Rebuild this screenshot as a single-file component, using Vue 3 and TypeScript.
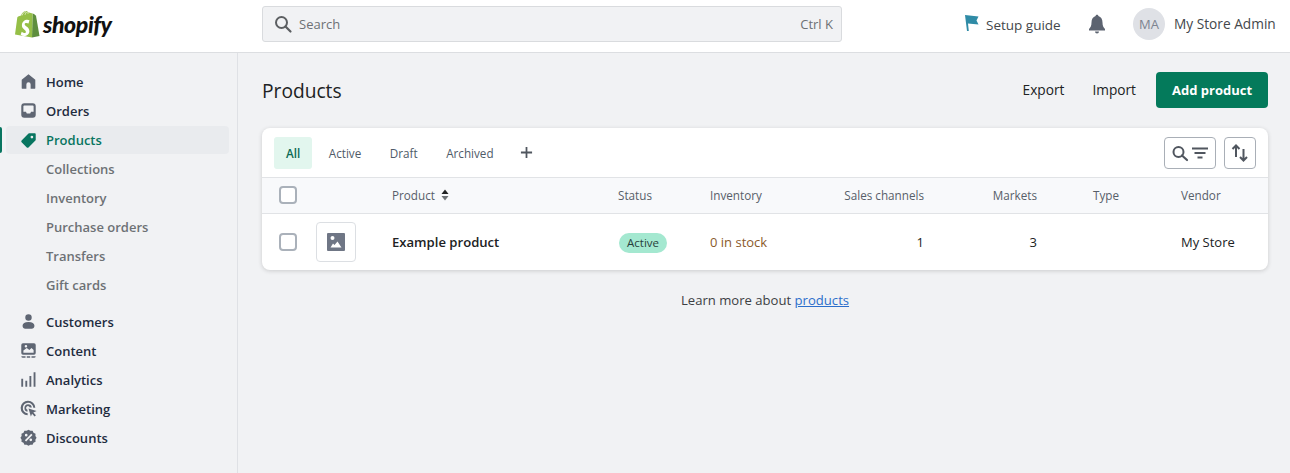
<script setup lang="ts">
interface NavItem { label: string; icon: string; active?: boolean }
const topNav: NavItem[] = [
  { label: 'Home', icon: 'M10 1.500 2 8v9.500a1 1 0 0 0 1 1h4.500v-5a2.500 2.500 0 0 1 5 0v5H17a1 1 0 0 0 1-1V8z' },
  { label: 'Orders', icon: 'M5 1.500h10a3.500 3.500 0 0 1 3.500 3.500v10a3.500 3.500 0 0 1-3.500 3.500H5A3.500 3.500 0 0 1 1.500 15V5A3.500 3.500 0 0 1 5 1.500zm0 2.500a1 1 0 0 0-1 1v6.500h3l1 2h4l1-2h3V5a1 1 0 0 0-1-1z' },
  { label: 'Products', active: true, icon: 'M11 1.500h6.500a1 1 0 0 1 1 1V9a1.400 1.400 0 0 1-.4 1L10 18.100a1.400 1.400 0 0 1-2 0L1.900 12a1.400 1.400 0 0 1 0-2L10 1.900a1.400 1.400 0 0 1 1-.4zm3 2.900a1.600 1.600 0 1 0 0 3.200 1.600 1.600 0 0 0 0-3.200z' },
]
const subNav = ['Collections', 'Inventory', 'Purchase orders', 'Transfers', 'Gift cards']
const bottomNav: NavItem[] = [
  { label: 'Customers', icon: 'M10 1.500a3.800 3.800 0 1 1 0 7.600 3.800 3.800 0 0 1 0-7.600zM10 10.500c4.500 0 7 1.800 7 4.500 0 2.200-1.500 3.500-3.200 3.500H6.200C4.500 18.500 3 17.200 3 15c0-2.700 2.500-4.500 7-4.500z' },
  { label: 'Content', icon: 'M3.500 1.500h13a2 2 0 0 1 2 2v9.500a2 2 0 0 1-2 2h-13a2 2 0 0 1-2-2V3.500a2 2 0 0 1 2-2zm.5 11h12V9.500L13.500 7l-2.500 2.500L8 7 4 10zM7 3.500a1.500 1.500 0 1 0 0 3 1.500 1.500 0 0 0 0-3zM1.500 16.700h5v1.800h-3a2 2 0 0 1-2-1.800zm6.500 0h4v1.800H8zm5.500 0h5a2 2 0 0 1-2 1.800h-3z' },
  { label: 'Analytics', icon: 'M1.500 9h2.200v9.500H1.500zM6.300 11.500h2.200v7H6.300zM11.100 6h2.200v12.500h-2.200zM16 1.500h2.200v17H16z' },
  { label: 'Marketing', icon: 'M9.500 1a8.500 8.500 0 0 1 8.500 8h-2.300a6.200 6.200 0 1 0-6.700 6.700V18A8.500 8.500 0 0 1 9.500 1zm0 4a4.500 4.500 0 0 1 4.400 3.800h-2.400a2.200 2.200 0 1 0-2.700 2.700v2.400A4.500 4.500 0 0 1 9.500 5zM10 10l9.500 3-3.800 1.800 3 3-1.500 1.500-3-3L12.800 19.500z' },
  { label: 'Discounts', icon: 'M10 .800l2.200 1.400 2.600-.2 1.100 2.400 2.400 1.100-.2 2.600 1.400 2.200-1.400 2.200.2 2.600-2.400 1.100-1.100 2.400-2.600-.2-2.200 1.400-2.200-1.400-2.600.2-1.100-2.400-2.400-1.100.2-2.600L.5 10.300l1.400-2.200-.2-2.600 2.400-1.100L5.200 2l2.600.2zM7.300 5.700a1.600 1.600 0 1 0 0 3.200 1.600 1.600 0 0 0 0-3.200zm5.400 5.400a1.600 1.600 0 1 0 0 3.200 1.600 1.600 0 0 0 0-3.200zm.5-5.500-7.500 7.500 1.500 1.500 7.500-7.500z' },
]
const tabs = ['All', 'Active', 'Draft', 'Archived']
</script>

<template>
  <div class="page">
    <header class="topbar">
      <div class="brand">
        <svg class="bag" viewBox="0 0 26 28" width="26" height="28" aria-hidden="true">
          <path d="M18.500 3.600 20 4l2 1.800L25.500 26 18 27.600z" fill="#5e8e3e" />
          <path d="M1 24.500 3.300 7.500c.1-.6.3-.9.900-1.100L7 5.500C8 2.700 10 1 12 1c1 0 1.700.5 2.200 1.300l4.300 1.300L18 27.600z" fill="#95bf47" />
          <path d="M15.500 10.300l-1 3.300c-1-.5-3.600-1.200-3.800.6-.2 2 4.700 2.400 4.700 7 0 4.500-5.700 6-8.700 3.500l1-3c1.100 1 4 2.100 4.200.2.200-2.100-4-2.500-4-6.600 0-4.900 5-6.700 7.600-5z" fill="#fff" />
          <path d="M8 5.500C9 3 10.300 1.700 12 1.700M11 4.800c.5-1.500 1.200-2.500 2.200-3M14 3.800c0-.8 0-1.500-.2-2" fill="none" stroke="#fff" stroke-width=".6" />
        </svg>
        <span class="wordmark">shopify</span>
      </div>
      <div class="search">
        <svg viewBox="0 0 20 20" width="20" height="20" aria-hidden="true">
          <circle cx="8.500" cy="8.500" r="5.500" fill="none" stroke="#5c5f62" stroke-width="2" />
          <path d="m12.500 12.500 5 5" stroke="#5c5f62" stroke-width="2.200" stroke-linecap="round" />
        </svg>
        <span class="search-text">Search</span>
        <span class="kbd">Ctrl K</span>
      </div>
      <div class="top-right">
        <div class="setup">
          <svg viewBox="0 0 16 18" width="16" height="18" aria-hidden="true">
            <path d="M1 1 14.500 2.500 12.500 6.500 14.500 10.500 4 9.500 4.800 17 3 17z" fill="#2f8ba6" />
          </svg>
          <span>Setup guide</span>
        </div>
        <svg class="bell" viewBox="0 0 18 20" width="18" height="20" aria-hidden="true">
          <path d="M9 .800c.8 0 1.300.5 1.400 1.200C13 2.800 14.500 5.200 14.500 8.500c0 3.500 1 4.800 2.500 6.500v1.500H1V15c1.500-1.700 2.500-3 2.500-6.500 0-3.300 1.500-5.700 4.100-6.500.1-.7.600-1.200 1.400-1.200zM7 17.500h4a2 2 0 0 1-4 0z" fill="#5c6370" />
        </svg>
        <div class="avatar">MA</div>
        <span class="store">My Store Admin</span>
      </div>
    </header>

    <div class="body">
      <nav class="sidebar">
        <div class="nav-group">
          <div v-for="item in topNav" :key="item.label" class="nav-item" :class="{ active: item.active }">
            <svg viewBox="0 0 20 20" width="17" height="17" aria-hidden="true"><path :d="item.icon" fill-rule="evenodd" /></svg>
            <span>{{ item.label }}</span>
          </div>
          <div v-for="item in subNav" :key="item" class="nav-sub">{{ item }}</div>
        </div>
        <div class="nav-group">
          <div v-for="item in bottomNav" :key="item.label" class="nav-item">
            <svg viewBox="0 0 20 20" width="17" height="17" aria-hidden="true"><path :d="item.icon" fill-rule="evenodd" /></svg>
            <span>{{ item.label }}</span>
          </div>
        </div>
      </nav>

      <main class="main">
        <div class="title-row">
          <h1>Products</h1>
          <div class="actions">
            <span class="plain">Export</span>
            <span class="plain">Import</span>
            <button class="primary" type="button">Add product</button>
          </div>
        </div>

        <section class="card">
          <div class="tabs">
            <span v-for="(t, i) in tabs" :key="t" class="tab" :class="{ selected: i === 0 }">{{ t }}</span>
            <svg class="plus" viewBox="0 0 14 14" width="13" height="13" aria-hidden="true">
              <path d="M7 1v12M1 7h12" stroke="#50565f" stroke-width="1.900" />
            </svg>
            <div class="tools">
              <button class="tool wide" type="button" aria-label="Search and filter">
                <svg viewBox="0 0 38 20" width="38" height="20" aria-hidden="true">
                  <circle cx="7.500" cy="9" r="5" fill="none" stroke="#50565f" stroke-width="2" />
                  <path d="m11 12.500 5 4.500" stroke="#50565f" stroke-width="2.200" stroke-linecap="round" />
                  <path d="M21 5.500h16M23.500 10h11M26.500 14.500h5" stroke="#50565f" stroke-width="2" />
                </svg>
              </button>
              <button class="tool" type="button" aria-label="Sort">
                <svg viewBox="0 0 18 18" width="18" height="18" aria-hidden="true">
                  <path d="M5 13V1.500M1.500 5 5 1.500 8.500 5M12.500 5v11.500M9 13l3.500 3.500L16 13" fill="none" stroke="#50565f" stroke-width="2" />
                </svg>
              </button>
            </div>
          </div>

          <div class="grid head">
            <span class="check"></span>
            <span></span>
            <span class="sortable">Product
              <svg viewBox="0 0 8 12" width="8" height="12" aria-hidden="true">
                <path d="M4 .5 7.500 5h-7z" fill="#202223" /><path d="M.5 7h7L4 11.500z" fill="#6d7175" />
              </svg>
            </span>
            <span>Status</span>
            <span>Inventory</span>
            <span class="right">Sales channels</span>
            <span class="right">Markets</span>
            <span class="type">Type</span>
            <span>Vendor</span>
          </div>

          <div class="grid row">
            <span class="check"></span>
            <span class="thumb">
              <svg viewBox="0 0 20 20" width="20" height="20" aria-hidden="true">
                <path fill-rule="evenodd" fill="#6f7685" d="M2 1h16a1 1 0 0 1 1 1v16a1 1 0 0 1-1 1H2a1 1 0 0 1-1-1V2a1 1 0 0 1 1-1zm2.500 14.500h11L11.500 9.500 8.500 13 7 11.500zM6.500 4a2 2 0 1 0 0 4 2 2 0 0 0 0-4z" />
              </svg>
            </span>
            <span class="name">Example product</span>
            <span><span class="badge">Active</span></span>
            <span class="stock">0 in stock</span>
            <span class="right">1</span>
            <span class="right">3</span>
            <span class="type"></span>
            <span>My Store</span>
          </div>
        </section>

        <p class="learn">Learn more about <a href="#">products</a></p>
      </main>
    </div>
  </div>
</template>

<style>
html, body { margin: 0; background: #f1f2f4; }
</style>

<style scoped>
.page {
  width: 1290px;
  height: 473px;
  overflow: hidden;
  background: #f1f2f4;
  color: #202223;
  font: 13px/20px "Open Sans", "Noto Sans", sans-serif;
}
.topbar {
  height: 53px;
  box-sizing: border-box;
  padding-bottom: 4px;
  display: flex;
  align-items: center;
  background: #fff;
  border-bottom: 1px solid #dcdee1;
}
.brand { width: 262px; display: flex; align-items: center; padding-left: 14px; box-sizing: border-box; gap: 3px; }
.wordmark {
  font: italic 900 23px/28px "Lato", sans-serif;
  letter-spacing: -0.4px;
  color: #111;
}
.search {
  width: 580px;
  height: 36px;
  box-sizing: border-box;
  display: flex;
  align-items: center;
  padding: 0 8px 0 10px;
  background: #f1f2f4;
  border: 1px solid #d9dbde;
  border-radius: 3px;
  color: #6d7175;
}
.search-text { margin-left: 6px; flex: 1; }
.top-right { flex: 1; display: flex; align-items: center; padding-left: 122px; }
.setup { display: flex; align-items: center; gap: 6px; color: #44474b; width: 124px; font-size: 13.500px; }
.setup span { padding-top: 2px; }
.setup svg { margin-top: -2px; }
.avatar {
  margin-left: 27px;
  width: 32px;
  height: 32px;
  border-radius: 50%;
  background: #dfe1e6;
  color: #7d8490;
  display: flex;
  align-items: center;
  justify-content: center;
}
.store { margin-left: 9px; color: #44474b; font-size: 13.700px; font-weight: 500; white-space: nowrap; }
.body { display: flex; height: 420px; }
.sidebar {
  width: 238px;
  flex: none;
  box-sizing: border-box;
  border-right: 1px solid #dfe1e5;
  padding-top: 14px;
  display: flex;
  flex-direction: column;
  gap: 8px;
}
.nav-item, .nav-sub { height: 29px; display: flex; align-items: center; font-weight: 570; }
.nav-item { padding-left: 20px; gap: 9px; position: relative; margin-right: 8px; color: #1f2c3f; }
.nav-item svg { fill: #5f6673; flex: none; }
.nav-item.active { height: 28px; margin-top: 1px; color: #087560; background: #e9ebee; border-radius: 4px; margin-left: 6px; padding-left: 14px; }
.nav-item.active svg { fill: #087560; }
.nav-item.active::before {
  content: "";
  position: absolute;
  left: -6px;
  top: 1px;
  width: 2px;
  height: 26px;
  background: #087560;
  border-radius: 0 2px 2px 0;
}
.nav-sub { padding-left: 46px; color: #6d7175; }
.main { flex: 1; padding: 19px 22px 0 24px; min-width: 0; }
.title-row { display: flex; align-items: center; justify-content: space-between; height: 36px; }
h1 { margin: 0; padding-top: 1px; font-size: 19.200px; line-height: 28px; font-weight: 500; color: #202223; }
.actions { display: flex; align-items: center; gap: 28px; }
.plain { font-size: 13.700px; font-weight: 500; }
.primary {
  width: 112px;
  height: 36px;
  margin-left: -8px;
  background: #047a5b;
  color: #fff;
  border: 0;
  border-radius: 4px;
  font: 700 13px/20px "Open Sans", sans-serif;
}
.card {
  margin-top: 20px;
  background: #fff;
  border-radius: 8px;
  box-shadow: 0 1px 4px rgba(32, 34, 35, .18);
}
.tabs { height: 49px; box-sizing: border-box; display: flex; align-items: center; padding: 0 12px; }
.tab { height: 32px; box-sizing: border-box; display: flex; align-items: center; padding: 1px 12px 0; margin-right: 4.500px; border-radius: 3px; font-size: 11.700px; color: #4f5b68; font-weight: 500; }
.tab.selected { background: #e2f6ee; color: #0c6a55; font-weight: 600; }
.plus { margin-left: 10px; }
.tools { margin-left: auto; display: flex; gap: 8px; }
.tool {
  width: 32px;
  height: 32px;
  padding: 0;
  display: flex;
  align-items: center;
  justify-content: center;
  background: #fff;
  border: 1px solid #a9afb7;
  border-radius: 4px;
}
.tool.wide { width: 52px; }
.grid {
  display: grid;
  grid-template-columns: 37px 76px 226px 92px 100px 114px 113px 144px 1fr;
  align-items: center;
  padding-left: 17px;
}
.head {
  height: 37px;
  box-sizing: border-box;
  padding-bottom: 1px;
  background: #f8f9fb;
  border-top: 1px solid #e1e3e6;
  border-bottom: 1px solid #e1e3e6;
  font-size: 11.700px;
  color: #575e69;
  font-weight: 500;
}
.row { height: 56px; }
.right { text-align: right; }
.type { padding-left: 56px; }
.sortable { display: flex; align-items: center; gap: 6px; }
.check {
  width: 18px;
  height: 18px;
  box-sizing: border-box;
  border: 2px solid #aab1ba;
  border-radius: 4px;
  background: #fff;
}
.thumb {
  width: 40px;
  height: 40px;
  box-sizing: border-box;
  display: flex;
  align-items: center;
  justify-content: center;
  border: 1px solid #dcdfe3;
  border-radius: 4px;
}
.name { font-size: 13.100px; font-weight: 600; }
.badge {
  display: inline-block;
  margin-left: 1px;
  padding: 0 8px;
  height: 20px;
  line-height: 20px;
  border-radius: 10px;
  background: #a4e8d0;
  font-size: 11.500px;
  color: #27403c;
}
.stock { color: #8a5a2b; }
.learn { margin: 20px 0 0; text-align: center; font-size: 13.100px; color: #3c4043; }
.learn a { color: #2c6ecb; }
</style>
